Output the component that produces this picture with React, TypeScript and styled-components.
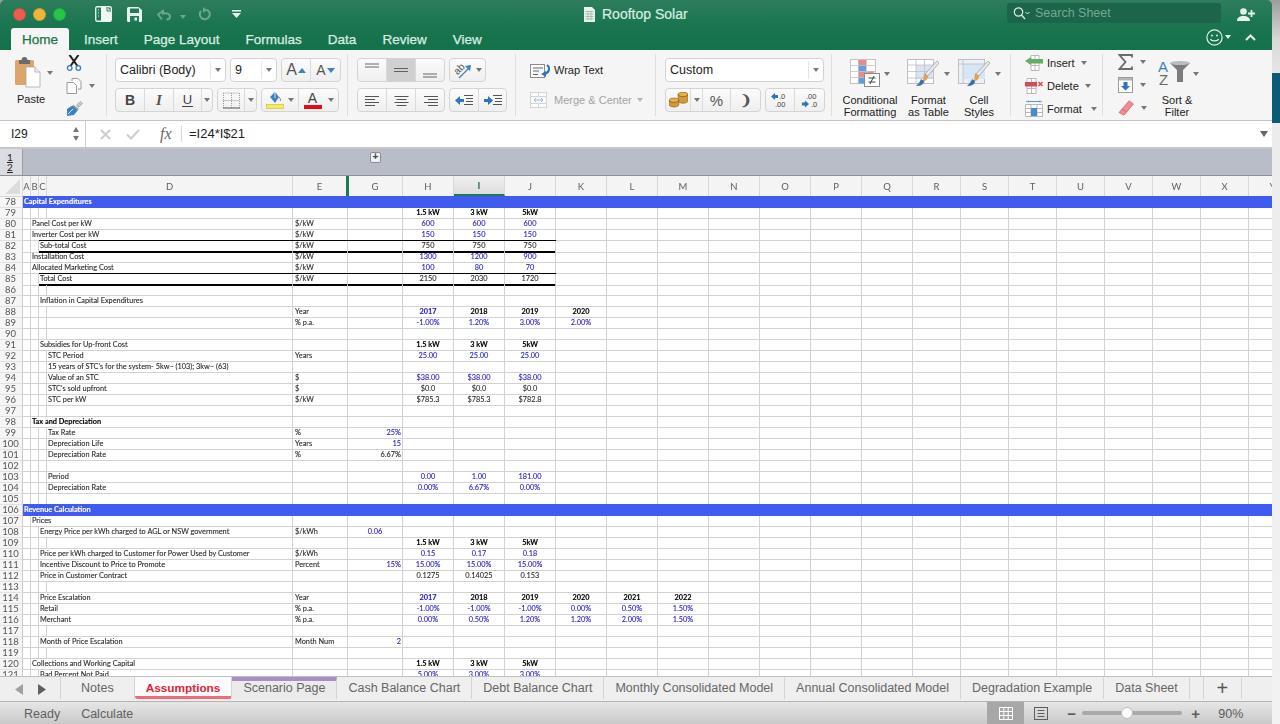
import React from 'react';
import styled, { createGlobalStyle } from 'styled-components';

const Global = createGlobalStyle`
  html, body { margin: 0; padding: 0; background: #e4e4e4; }
  * { box-sizing: border-box; }
  body { font-family: "Liberation Sans", Arial, sans-serif; overflow: hidden; }
`;

const COLS = '23px 8px 8px 8px 246px 55px 55px repeat(10, 51px) repeat(7, 48px) 48px';
const CELL_FONT = '"Lato", "Open Sans", sans-serif';

const Page = styled.div`
  width: 1280px; height: 724px; display: flex; overflow: hidden;
  background: linear-gradient(180deg, #9d9d9d 0, #d9d9d9 40px, #e6e6e6 73px, #0d5a77 73px, #0d5a77 123px, #ececec 123px, #f2f2f2 100%);
`;
const Window = styled.div`
  width: 1272px; height: 724px; display: flex; flex-direction: column; border-radius: 5px 5px 0 0; overflow: hidden;
`;
const Header = styled.header`
  height: 50px; background: linear-gradient(180deg, #2d7d5c 0, #1b7550 50%, #14714a 100%); display: flex; flex-direction: column;
`;
const TitleBar = styled.div`
  height: 28px; display: flex; align-items: center; position: relative; padding-left: 13px;
`;
const Light = styled.span<{ $c: string }>`
  width: 13px; height: 13px; border-radius: 50%; background: ${p => p.$c}; margin-right: 7px; border: 1px solid rgba(0,0,0,.12);
`;
const QuickBar = styled.div`
  display: flex; align-items: center; margin-left: 21px;
`;
const QuickSlot = styled.span<{ $m: number }>`
  display: flex; margin-left: ${p => p.$m}px;
`;
const Title = styled.div`
  position: absolute; left: 584px; top: 6px; display: flex; align-items: center; gap: 7px;
  color: #d8eee3; font-size: 14px; line-height: 16px; -webkit-text-stroke: .2px #d8eee3;
`;
const SearchBox = styled.div`
  margin-left: auto; margin-top: -2px; width: 214px; height: 20px; border-radius: 3px; background: #1c644a; display: flex; align-items: center;
  padding-left: 6px; gap: 5px; color: #73aa92; font-size: 12.5px;
`;
const TopRight = styled.span`
  display: flex; width: 51px; padding-left: 16px;
`;
const TabRow = styled.nav`
  height: 22px; display: flex; padding-left: 11px; position: relative;
`;
const RibbonTab = styled.div<{ $active?: boolean }>`
  height: 22px; padding: 0 ${p => (p.$active ? 11 : 13)}px; margin-right: ${p => (p.$active ? 2 : 0)}px; font-size: 13.5px; line-height: 23px;
  border-radius: 3px 3px 0 0;
  color: ${p => (p.$active ? '#1f7249' : '#d9eee3')};
  background: ${p => (p.$active ? '#f5f5f5' : 'transparent')};
  -webkit-text-stroke: .25px ${p => (p.$active ? '#1f7249' : '#d9eee3')};
`;
const TabTools = styled.div`
  margin-left: auto; display: flex; align-items: center; gap: 2px; padding-right: 16px; margin-top: -4px;
`;

const Ribbon = styled.section`
  height: 71px; background: #f5f5f5; border-bottom: 1px solid #c4c4c4; display: flex;
`;
const Group = styled.div<{ $w: number; $pad: number; $last?: boolean }>`
  width: ${p => p.$w}px; height: 62px; margin-top: 4px; padding: 4px 0 0 ${p => p.$pad}px; display: flex; align-items: flex-start;
  border-right: ${p => (p.$last ? 'none' : '1px solid #dedede')};
`;
const Caret = styled.span<{ $c?: string; $ml?: number; $mt?: number }>`
  display: inline-block; flex: none; width: 0; height: 0; border-left: 3px solid transparent; border-right: 3px solid transparent;
  border-top: 4px solid ${p => p.$c || '#777'}; margin-left: ${p => p.$ml || 0}px; margin-top: ${p => p.$mt || 0}px;
`;
const PasteCol = styled.div`
  width: 32px; display: flex; flex-direction: column; margin-top: -1px; font-size: 11px; line-height: 12px; color: #222;
  text-align: center; gap: 5px;
`;
const MiniCol = styled.div`
  display: flex; flex-direction: column; gap: 7px; margin: -3px 0 0 13px;
`;
const MiniRow = styled.div`
  display: flex; align-items: center; gap: 7px;
`;
const Stack = styled.div`
  display: flex; flex-direction: column; gap: 6px;
`;
const Line = styled.div`
  display: flex; gap: 4px; height: 24px; align-items: center;
`;
const Combo = styled.div<{ $w: number }>`
  width: ${p => p.$w}px; height: 24px; background: #fff; border: 1px solid #d2d2d2; border-radius: 4px; display: flex; align-items: center;
  padding-left: 4px; font-size: 12.5px; color: #222;
`;
const ComboArrow = styled.span`
  margin-left: auto; width: 15px; height: 18px; border-left: 1px solid #e6e6e6; display: flex; align-items: center; justify-content: center;
`;
const Buttons = styled.div`
  display: flex; height: 24px; border: 1px solid #d4d4d4; border-radius: 4px; overflow: hidden; background: linear-gradient(180deg, #fbfbfb, #efefef);
`;
const Btn = styled.div<{ $w: number; $on?: boolean; $gap?: number }>`
  width: ${p => p.$w}px; height: 100%; display: flex; align-items: center; justify-content: center; gap: ${p => p.$gap ?? 1}px;
  border-right: 1px solid #dadada; background: ${p => (p.$on ? '#d0d0d0' : 'transparent')}; color: #444;
  &:last-child { border-right: none; }
`;
const BoldB = styled.span`
  font-size: 14px; font-weight: 700; color: #444;
`;
const ItalicI = styled.span`
  font-family: "Liberation Serif", serif; font-style: italic; font-weight: 700; font-size: 15px; color: #555;
`;
const UnderU = styled.span`
  font-size: 13px; color: #444; border-bottom: 1px solid #444; line-height: 13px; padding: 0 1px;
`;
const GrowA = styled.span<{ $s: number }>`
  font-size: ${p => p.$s}px; color: #555; line-height: 1;
`;
const Tri = styled.span<{ $dir: 'up' | 'down' }>`
  width: 0; height: 0; border-left: 4px solid transparent; border-right: 4px solid transparent;
  ${p => (p.$dir === 'up' ? 'border-bottom: 5px solid #3f80c4;' : 'border-top: 5px solid #3f80c4;')}
`;
const ColorChip = styled.span`
  display: flex; flex-direction: column; align-items: center; width: 18px; font-size: 14px; line-height: 14px; color: #444;
`;
const ColorBar = styled.span`
  width: 18px; height: 4px; background: #e60a18;
`;
const Sym = styled.span<{ $s: number; $w?: number }>`
  font-size: ${p => p.$s}px; color: #555; font-weight: ${p => p.$w || 400}; line-height: 1;
`;
const ActionRow = styled.div<{ $dim?: boolean }>`
  height: 24px; display: flex; align-items: center; font-size: 11px; color: ${p => (p.$dim ? '#a3a3a3' : '#222')};
  gap: 3px;
`;
const StyleItem = styled.div<{ $w: number }>`
  width: ${p => p.$w}px; display: flex; flex-direction: column; align-items: center;
`;
const StyleIcon = styled.div`
  height: 36px; padding-top: 1px; display: flex; gap: 4px; align-items: flex-start;
  & > span { margin-top: 13px; }
`;
const SortIcon = styled(StyleIcon)`
  gap: 2px; padding-left: 3px;
`;
const StyleLabel = styled.div`
  font-size: 11px; line-height: 12px; text-align: center; color: #222; white-space: nowrap;
`;
const CellCol = styled.div`
  display: flex; flex-direction: column; margin-top: -7px;
`;
const CellAction = styled.div`
  flex: none; height: 23px; display: flex; align-items: center; gap: 4px; font-size: 11px; color: #222;
`;
const EditCol = styled.div`
  width: 30px; display: flex; flex-direction: column; gap: 7px; margin-top: -4px;
`;
const EditRow = styled.div`
  flex: none; display: flex; align-items: center; gap: 7px; height: 16px;
`;

const FormulaBar = styled.section`
  height: 28px; background: #fff; border-bottom: 2px solid #c6c6c6; display: flex; align-items: center; font-size: 12px; color: #222;
`;
const NameBox = styled.div`
  width: 86px; height: 100%; padding-left: 11px; border-right: 1px solid #cfcfcf; display: flex; align-items: center; justify-content: space-between; padding-right: 6px;
`;
const Stepper = styled.div`
  display: flex; flex-direction: column; gap: 4px;
`;
const StepTri = styled.span<{ $up?: boolean }>`
  width: 0; height: 0; border-left: 3.5px solid transparent; border-right: 3.5px solid transparent;
  ${p => (p.$up ? 'border-bottom: 5px solid #777;' : 'border-top: 5px solid #777;')}
`;
const FxSlot = styled.div`
  display: flex; align-items: center; width: 95px; height: 100%; padding-left: 14px; gap: 15px;
`;
const Fx = styled.span`
  font-family: "Liberation Serif", serif; font-style: italic; font-size: 16px; color: #666; margin-left: 5px;
`;
const FormulaText = styled.div`
  flex: 1; height: 16px; line-height: 16px; border-left: 1px solid #d8d8d8; padding-left: 7px; font-size: 13px;
  display: flex; justify-content: space-between; align-items: center; padding-right: 4px;
`;
const FormulaMenu = styled.span`
  width: 0; height: 0; border-left: 4px solid transparent; border-right: 4px solid transparent; border-top: 6px solid #666;
`;

const Outline = styled.div`
  height: 27px; background: #b9bdc7; border-bottom: 1px solid #8d9097; display: flex; position: relative;
`;
const OutlineLevels = styled.div`
  width: 23px; background: #dadce1; border-right: 1px solid #9a9da5; display: flex; flex-direction: column; padding-left: 7px; padding-top: 3px;
  font-size: 10px; line-height: 10px; color: #222; font-family: ${CELL_FONT};
`;
const OutlineLevel = styled.span`
  text-decoration: underline;
`;
const PlusBox = styled.div`
  margin: 3px 0 0 347px; width: 11px; height: 11px; border: 1px solid #8a8d94; border-radius: 2px; background: #eef0f3; color: #444;
  font-size: 10px; line-height: 8px; text-align: center; font-weight: 700;
`;

const Sheet = styled.div`
  flex: 1; min-height: 0; overflow: hidden; background: #fff; filter: blur(.25px);
`;
const ColHeadRow = styled.div`
  display: grid; grid-template-columns: ${COLS}; height: 21px; background: #f4f4f4; border-bottom: 1px solid #d6d6d6;
`;
const Corner = styled.div`
  position: relative; border-right: 1px solid #d8d8d8;
  &::before { content: ''; position: absolute; left: 5px; top: 3px; width: 15px; height: 15px; background: #dcdcdc; clip-path: polygon(100% 0, 100% 100%, 0 100%); }
`;
const ColHead = styled.div<{ $sel?: boolean; $mark?: boolean }>`
  display: flex; align-items: center; justify-content: center; font-family: ${CELL_FONT}; font-size: 9.5px; color: ${p => (p.$sel ? '#1f6e4a' : '#5e5e5e')};
  font-weight: ${p => (p.$sel ? 700 : 400)};
  border-right: ${p => (p.$mark ? '3px solid #1f7a52' : '1px solid #d8d8d8')};
  margin-right: ${p => (p.$mark ? '-1px' : '0')};
  background: ${p => (p.$sel ? 'linear-gradient(180deg, #f0f0f0, #dedede)' : 'transparent')};
  border-bottom: ${p => (p.$sel ? '2px solid #1f7a52' : 'none')};
`;
const RowEl = styled.div`
  display: grid; grid-template-columns: ${COLS}; height: 11px; font-family: ${CELL_FONT}; font-size: 7.35px; line-height: 10px; color: #333;
  -webkit-text-stroke: .1px currentColor;
`;
const RowNum = styled.div`
  background: #f6f6f6; border-right: 1px solid #cbcbcb; border-bottom: 1px solid #e2e2e2; font-size: 9.5px; line-height: 10px; color: #555; text-align: center; padding-right: 1px;
  -webkit-text-stroke: 0;
`;
const Cell = styled.div<{ $rule?: boolean; $align?: string; $tone?: string; $bold?: boolean; $span?: number; $pad?: number }>`
  border-right: 1px solid #d2d2d2;
  border-bottom: ${p => (p.$rule ? '2px solid #000' : '1px solid #d2d2d2')};
  ${p => (p.$rule ? 'box-shadow: 0 -1px 0 #000;' : '')}
  ${p => (p.$span ? `grid-column: span ${p.$span};` : '')}
  text-align: ${p => p.$align || 'left'};
  color: ${p => (p.$tone === 'blue' ? '#2a22c8' : p.$bold ? '#000' : '#2a2a2a')};
  font-weight: ${p => (p.$bold ? 700 : 400)};
  padding: 0 ${p => p.$pad ?? 0}px;
  white-space: nowrap;
`;
const Band = styled.div`
  grid-column: 2 / -1; background: #3f5bf0; color: #fff; font-weight: 700; padding-left: 1px; box-shadow: 0 -1px 0 #3f5bf0; line-height: 10px;
`;

const SheetTabs = styled.div`
  height: 26px; background: #efefef; border-top: 1px solid #c0c0c0; border-bottom: 1px solid #b4b4b4; display: flex; align-items: flex-start;
  font-size: 12.5px; color: #666;
`;
const TabNav = styled.div`
  width: 61px; height: 22px; padding-top: 2px; border-right: 1px solid #d4d4d4; display: flex; align-items: center; padding-left: 15px; gap: 15px;
`;
const SheetTab = styled.div<{ $active?: boolean; $accent?: boolean; $pad?: number }>`
  height: 22px; line-height: ${p => (p.$accent ? 14 : 22)}px; padding: 0 ${p => p.$pad ?? 11}px; white-space: nowrap; border-right: 1px solid #d4d4d4;
  ${p => (p.$active ? 'color: #e1233a; font-weight: 700; font-size: 11.8px; background: #fbfbfb; border-bottom: 3px solid #ee6a79; border-radius: 0 0 3px 3px;' : '')}
  ${p => (p.$accent ? 'border-top: 4px solid #a98ec7; background: #ebebeb;' : '')}
`;
const AddTab = styled.div`
  width: 39px; height: 22px; border-left: 1px solid #d4d4d4; border-right: 1px solid #d4d4d4; margin-left: 13px; display: flex; align-items: center; justify-content: center;
`;
const Status = styled.footer`
  height: 22px; background: linear-gradient(180deg, #e6e6e6, #c9c9c9); display: flex; align-items: center; font-size: 12.5px; color: #606060;
`;
const StatusText = styled.span<{ $ml: number }>`
  margin-left: ${p => p.$ml}px; padding-top: 2px;
`;
const ViewBtn = styled.div<{ $on?: boolean; $ml?: number }>`
  height: 22px; width: ${p => (p.$on ? 37 : 14)}px; margin-left: ${p => p.$ml || 0}px; display: flex; align-items: center; justify-content: center;
  background: ${p => (p.$on ? '#a7a7a7' : 'transparent')};
`;
const ZoomSign = styled.span<{ $ml: number }>`
  margin-left: ${p => p.$ml}px; font-size: 15px; font-weight: 700; color: #5d5d5d; line-height: 1; width: 8px; text-align: center;
`;
const Track = styled.div`
  margin-left: 7px; width: 100px; height: 4px; border-radius: 2px; background: #a9a9a9; position: relative;
`;
const Knob = styled.span`
  position: absolute; left: 39px; top: -4px; width: 12px; height: 12px; border-radius: 50%; background: #fafafa; border: 1px solid #bdbdbd;
`;
const Percent = styled.span`
  margin-left: 19px; color: #5a5a5a; padding-top: 1px;
`;

/* ---------- icons ---------- */
const Ico = styled.svg`
  display: block; flex: none;
`;
const SidebarIcon = () => (
  <Ico width="17" height="16" viewBox="0 0 17 16">
    <rect x=".7" y=".7" width="15.6" height="14.6" rx="1.5" fill="none" stroke="#e6f2ec" strokeWidth="1.4" />
    <path d="M6 1h6l4 4v10H6z" fill="#eef7f2" />
    <path d="M12 1v4h4" fill="none" stroke="#2a7a58" strokeWidth="1" />
    <path d="M3 4h1M3 7h1M3 10h1" stroke="#e6f2ec" strokeWidth="1.2" />
  </Ico>
);
const SaveIcon = () => (
  <Ico width="15" height="15" viewBox="0 0 15 15">
    <path d="M1.5 0h10L15 3v10.5a1.5 1.5 0 0 1-1.5 1.5h-12A1.5 1.5 0 0 1 0 13.5v-12A1.5 1.5 0 0 1 1.5 0z" fill="#e6f2ec" />
    <rect x="3" y="1.5" width="9" height="4.5" fill="#26795a" />
    <rect x="3" y="9" width="9" height="6" fill="#26795a" />
    <rect x="7.5" y="10.5" width="2.5" height="3" fill="#e6f2ec" />
  </Ico>
);
const UndoIcon = () => (
  <Ico width="16" height="13" viewBox="0 0 16 13">
    <path d="M5 11.5 1 6.5 6 3v2.6c3.5-.8 7 0 7 3 0 1.8-1.5 3-3.5 3" fill="none" stroke="#6ba88e" strokeWidth="2" />
  </Ico>
);
const RedoIcon = () => (
  <Ico width="13" height="14" viewBox="0 0 13 14">
    <path d="M8.5 2.6A5 5 0 1 1 3 4" fill="none" stroke="#6ba88e" strokeWidth="2" />
    <path d="M5 0v6l4-3z" fill="#6ba88e" />
  </Ico>
);
const CustomizeIcon = () => (
  <Ico width="9" height="8" viewBox="0 0 9 8">
    <rect x="0" y="0" width="9" height="1.6" fill="#e6f2ec" />
    <path d="M0 3h9L4.5 8z" fill="#e6f2ec" />
  </Ico>
);
const DocIcon = () => (
  <Ico width="11" height="15" viewBox="0 0 11 15">
    <path d="M0 0h8l3 3v12H0z" fill="#e8f2ec" />
    <path d="M1.5 4.5h8M1.5 7h8M1.5 9.500h8M1.5 12h8M4 4v9M7 4v9" stroke="#8fb09f" strokeWidth=".7" />
  </Ico>
);
const MagnifyIcon = () => (
  <Ico width="17" height="13" viewBox="0 0 17 13">
    <circle cx="5.5" cy="5" r="4.2" fill="none" stroke="#d8eee3" strokeWidth="1.2" />
    <path d="M8.500 8 12 12" stroke="#d8eee3" strokeWidth="1.4" />
    <path d="M12.500 5l2 2 2-2" fill="none" stroke="#d8eee3" strokeWidth="1" />
  </Ico>
);
const UserPlusIcon = () => (
  <Ico width="18" height="13" viewBox="0 0 18 13">
    <circle cx="6.500" cy="3.500" r="3.300" fill="#e6f2ec" />
    <path d="M0 13c0-3.500 2.500-5 6.500-5s6.500 1.500 6.500 5z" fill="#e6f2ec" />
    <path d="M14.500 2v7M11 5.500h7" stroke="#e6f2ec" strokeWidth="1.800" />
  </Ico>
);
const SmileIcon = () => (
  <Ico width="17" height="17" viewBox="0 0 17 17">
    <circle cx="8.500" cy="8.500" r="7.600" fill="none" stroke="#dff0e7" strokeWidth="1.200" />
    <circle cx="6" cy="6.500" r="1" fill="#dff0e7" />
    <circle cx="11" cy="6.500" r="1" fill="#dff0e7" />
    <path d="M4.500 10c1 2.500 7 2.500 8 0" fill="none" stroke="#dff0e7" strokeWidth="1.200" />
  </Ico>
);
const ChevronUp = () => (
  <Ico width="11" height="7" viewBox="0 0 11 7">
    <path d="M1 6l4.500-4.500L10 6" fill="none" stroke="#e6f2ec" strokeWidth="2" />
  </Ico>
);
const PasteIcon = () => (
  <Ico width="26" height="31" viewBox="0 0 26 31">
    <rect x="0" y="3" width="19" height="25" rx="1.500" fill="#dba56c" />
    <path d="M4 3h2.500c.3-2 1-3 3-3s2.700 1 3 3H15v4H4z" fill="#6b6b6b" />
    <path d="M11 10h9l5 5v15H11z" fill="#fff" stroke="#a8a8a8" strokeWidth=".8" />
    <path d="M20 10v5h5" fill="#f0f0f0" stroke="#a8a8a8" strokeWidth=".8" />
  </Ico>
);
const ScissorsIcon = () => (
  <Ico width="16" height="16" viewBox="0 0 16 16">
    <path d="M3.500 0 11.500 11M12.500 0 4.500 11" stroke="#1d1d1d" strokeWidth="2" />
    <circle cx="3.700" cy="13" r="2.300" fill="none" stroke="#3d7ac0" strokeWidth="1.300" />
    <circle cx="12.300" cy="13" r="2.300" fill="none" stroke="#3d7ac0" strokeWidth="1.300" />
  </Ico>
);
const CopyIcon = () => (
  <Ico width="16" height="16" viewBox="0 0 16 16">
    <path d="M6 3V.5h6l3 3V11h-3" fill="#fafafa" stroke="#9a9a9a" />
    <path d="M1 4.500h6.500l3 3v8H1z" fill="#fafafa" stroke="#9a9a9a" />
  </Ico>
);
const BrushIcon = () => (
  <Ico width="17" height="16" viewBox="0 0 17 16">
    <path d="M10.500 4 14.500 .5 16.500 2.500 12.500 6.500z" fill="#c9c9c9" stroke="#8e8e8e" strokeWidth=".6" />
    <path d="M7 3.500 13 8 8 13z" fill="#9a9a9a" />
    <path d="M1 8l5.500-3.500 5 5L8 14l-7 1z" fill="#3f80c4" />
    <path d="M2 13l5-5" stroke="#ffffff" strokeWidth=".8" />
  </Ico>
);
const BorderIcon = () => (
  <Ico width="17" height="17" viewBox="0 0 17 17">
    <path d="M.5 1h16M.5 8.500h16M.5 1v15M8.500 1v15M16.500 1v15" stroke="#9a9a9a" strokeWidth="1" strokeDasharray="1 1" fill="none" />
    <path d="M0 16h17" stroke="#555" strokeWidth="1.200" />
  </Ico>
);
const FillIcon = () => (
  <Ico width="18" height="18" viewBox="0 0 18 18">
    <path d="M4 6 9 1l4 5-4 6z" fill="#3f80c4" />
    <path d="M9 1v6" stroke="#ddd" />
    <path d="M13 6c1.500 2 2 3 1 4" fill="none" stroke="#777" />
    <rect x=".5" y="13.500" width="17" height="4" fill="#f6ee52" stroke="#c9c24a" strokeWidth=".7" />
  </Ico>
);
const VLines = ({ pos }: { pos: 0 | 1 | 2 }) => {
  const y = [3, 7.5, 13][pos];
  return (
    <Ico width="14" height="18" viewBox="0 0 14 18">
      <path d={`M0 ${y}h14M0 ${y + 3}h14`} stroke={'#555'} strokeWidth=".9" />
    </Ico>
  );
};
const HLines = ({ align }: { align: 'l' | 'c' | 'r' }) => {
  const rows: [number, number][] = [[4, 14], [7, 10], [10, 14], [13, 10]];
  return (
    <Ico width="15" height="17" viewBox="0 0 15 17">
      {rows.map(([y, w]) => {
        const x = align === 'l' ? 0 : align === 'c' ? (15 - w) / 2 : 15 - w;
        return <path key={y} d={`M${x} ${y}.5h${w}`} stroke="#555" strokeWidth="1" />;
      })}
    </Ico>
  );
};
const OrientIcon = () => (
  <Ico width="18" height="18" viewBox="0 0 18 18">
    <text x="1" y="12" fontSize="10" fill="#555" fontFamily="Liberation Sans" transform="rotate(-45 5 10)">ab</text>
    <path d="M5 17 15 7" stroke="#3f80c4" strokeWidth="1.200" />
    <path d="M11 5l6-1-1 6z" fill="#3f80c4" />
  </Ico>
);
const IndentIcon = ({ right }: { right?: boolean }) => (
  <Ico width="18" height="13" viewBox="0 0 18 13">
    <path d={right ? 'M0 5h4V2l5 4.500L4 11V8H0z' : 'M9 5H5V2L0 6.500 5 11V8h4z'} fill="#2f72bd" />
    <path d="M9 1.500h9M11 4.500h7M11 7.500h7M9 10.500h9" stroke="#555" strokeWidth="1" />
  </Ico>
);
const WrapIcon = () => (
  <Ico width="21" height="15" viewBox="0 0 21 15">
    <rect x=".5" y="1.500" width="14" height="13" fill="#fafafa" stroke="#8c8c8c" />
    <path d="M3 5h10M3 8h6M3 11.500h5" stroke="#666" strokeWidth="1" />
    <path d="M17 2c3 2 3 7-2 9" fill="none" stroke="#2f72bd" strokeWidth="2" />
    <path d="M11 11l5-3v6z" fill="#2f72bd" />
  </Ico>
);
const MergeIcon = () => (
  <Ico width="18" height="17" viewBox="0 0 18 17">
    <rect x=".5" y=".5" width="16" height="15" fill="#fbfbfb" stroke="#d4d4d4" />
    <path d="M.5 4.500h16M.5 11.500h16M8.500 .5v4M8.500 11.500v4" stroke="#d4d4d4" />
    <path d="M4 8h9M6 6 4 8l2 2M11 6l2 2-2 2" fill="none" stroke="#9cbcdd" strokeWidth="1" />
  </Ico>
);
const CoinsIcon = () => (
  <Ico width="19" height="16" viewBox="0 0 19 16">
    <ellipse cx="14" cy="2.500" rx="4.800" ry="2.200" fill="#e8b04a" stroke="#8a6420" strokeWidth=".7" />
    <path d="M9.200 2.500v6.500c0 1.200 2 2.200 4.800 2.200s4.800-1 4.800-2.200V2.500c0 1.200-2 2.200-4.800 2.200S9.200 3.700 9.200 2.500z" fill="#d69a35" stroke="#8a6420" strokeWidth=".7" />
    <ellipse cx="5" cy="8.300" rx="4.800" ry="2.200" fill="#e8b04a" stroke="#8a6420" strokeWidth=".7" />
    <path d="M.200 8.300v4.500c0 1.200 2 2.200 4.800 2.200s4.800-1 4.800-2.200V8.300c0 1.200-2 2.200-4.800 2.200S.200 9.500.200 8.300z" fill="#d69a35" stroke="#8a6420" strokeWidth=".7" />
  </Ico>
);
const DecIcon = ({ more }: { more?: boolean }) => (
  <Ico width="18" height="17" viewBox="0 0 18 17">
    {more ? (
      <>
        <path d="M0 4.500 4 1v2h3v3H4v2z" fill="#2f72bd" />
        <text x="8" y="6.500" fontSize="7.500" fill="#444" fontFamily="Liberation Sans">.0</text>
        <text x="4" y="15" fontSize="7.500" fill="#444" fontFamily="Liberation Sans">.00</text>
      </>
    ) : (
      <>
        <text x="5" y="6.500" fontSize="7.500" fill="#444" fontFamily="Liberation Sans">.00</text>
        <path d="M7 12 3 8.500v2H0v3h3v2z" transform="translate(1 0)" fill="#2f72bd" />
        <text x="10" y="15" fontSize="7.500" fill="#444" fontFamily="Liberation Sans">.0</text>
      </>
    )}
  </Ico>
);
const CondIcon = () => (
  <Ico width="30" height="28" viewBox="0 0 30 28">
    <rect x=".5" y=".5" width="25" height="24" fill="#fff" stroke="#c4c4c4" />
    <rect x="8" y="1" width="8" height="6" fill="#e98a90" />
    <rect x="8" y="6" width="8" height="6" fill="#5f9fe0" />
    <rect x="8" y="12" width="16" height="6" fill="#e98a90" />
    <rect x="8" y="18" width="8" height="6.500" fill="#5f9fe0" />
    <path d="M8.500 .5v24M16.500 .5v24M.5 6.500h25M.5 12.500h25M.5 18.500h25" stroke="#c4c4c4" strokeWidth=".8" />
    <rect x="14.500" y="14.500" width="15" height="13" fill="#fff" stroke="#8c8c8c" />
    <path d="M18.500 19h7M18.500 23h7M24 17l-4 8" stroke="#444" strokeWidth="1" />
  </Ico>
);
const TableBrushIcon = ({ plain }: { plain?: boolean }) => (
  <Ico width="33" height="28" viewBox="0 0 33 28">
    <rect x=".5" y=".5" width="26" height="24" fill={plain ? '#eaf1fa' : '#fff'} stroke="#bfbfbf" />
    {plain ? <rect x="5" y="5" width="22" height="15" fill="#d6e6f7" /> : <rect x="9" y="6" width="17" height="14" fill="#d6e6f7" />}
    {plain ? <path d="M5 .5v24M.5 5h26" stroke="#bfbfbf" strokeWidth=".8" /> : <path d="M9 .5v24M17.500 .5v24M.5 6h26M.5 12.500h26M.5 19h26" stroke="#bfbfbf" strokeWidth=".8" />}
    <path d="M30 2l2 2-11 13-3-2z" fill="#e8e8e8" stroke="#9a9a9a" strokeWidth=".7" />
    <path d="M17 14l4 3c0 3-2 5-5 5z" fill="#e6a050" />
    <path d="M9 27c4 0 8-1 8-5l-3-2c-1 3-3 5-5 7z" fill="#2f72bd" />
  </Ico>
);
const InsertIcon = () => (
  <Ico width="18" height="16" viewBox="0 0 18 16">
    <path d="M6 .5h8v15H6zM6 5.500h8M6 10.500h8M10 .5v15" fill="#fff" stroke="#aaa" strokeWidth=".8" />
    <rect x="5" y="4" width="13" height="4.500" fill="#5fb05f" />
    <path d="M6 2v8L0 6z" fill="#5fb05f" />
  </Ico>
);
const DeleteIcon = () => (
  <Ico width="18" height="16" viewBox="0 0 18 16">
    <path d="M2 .5h9v15H2zM2 5.500h9M2 10.500h9M6.500 .5v15" fill="#fff" stroke="#aaa" strokeWidth=".8" />
    <rect x="0" y="4" width="12" height="4.500" fill="#d84a50" />
    <path d="M13.500 4l4 4M17.500 4l-4 4" stroke="#d84a50" strokeWidth="1.500" />
  </Ico>
);
const FormatIcon = () => (
  <Ico width="18" height="17" viewBox="0 0 18 17">
    <path d="M.5 4.500h17v12H.5zM.5 8.500h17M.5 12.500h17M6 4.500v12M12 4.500v12" fill="#fff" stroke="#aaa" strokeWidth=".8" />
    <rect x="6" y="8" width="6" height="8" fill="#4d88c8" />
    <path d="M3 1.500h12M3 .5v2M15 .5v2M1 1.500h1M16 1.500h1" stroke="#4d88c8" strokeWidth=".9" />
  </Ico>
);
const SigmaIcon = () => (
  <Ico width="15" height="16" viewBox="0 0 15 16">
    <path d="M14 3.500V1H1.500l6 7-6 7H14v-2.500" fill="none" stroke="#6b6b6b" strokeWidth="1.800" />
  </Ico>
);
const FillDownIcon = () => (
  <Ico width="15" height="16" viewBox="0 0 15 16">
    <rect x=".5" y=".5" width="14" height="15" fill="#fff" stroke="#9c9c9c" />
    <rect x="1" y="1" width="13" height="2.500" fill="#b5b5b5" />
    <path d="M5.500 5h4v4h2.500l-4.500 4.500L3 9h2.500z" fill="#2f72bd" />
  </Ico>
);
const EraserIcon = () => (
  <Ico width="16" height="16" viewBox="0 0 16 16">
    <path d="M11 .8 15.500 4 6 15.200 1 12.500z" fill="#ef8c95" stroke="#c9606a" strokeWidth=".7" />
    <path d="M4 9l5 3" stroke="#c9606a" strokeWidth=".7" />
  </Ico>
);
const SortFilterIcon = () => (
  <Ico width="33" height="26" viewBox="0 0 33 26">
    <text x="0" y="13" fontSize="15" fill="#3f80c4" fontFamily="Liberation Sans">A</text>
    <text x="1" y="26" fontSize="15" fill="#6b6b6b" fontFamily="Liberation Sans">Z</text>
    <path d="M12 4h20l-7 7v12h-6V11z" fill="#7c7c7c" />
    <ellipse cx="22" cy="4" rx="10" ry="2" fill="#bcbcbc" />
  </Ico>
);
const XIcon = () => (
  <Ico width="11" height="11" viewBox="0 0 11 11">
    <path d="M1 1l9 9M10 1l-9 9" stroke="#cfcfcf" strokeWidth="2" />
  </Ico>
);
const CheckIcon = () => (
  <Ico width="14" height="11" viewBox="0 0 14 11">
    <path d="M1 5.500 5 9.500 13 1" fill="none" stroke="#cfcfcf" strokeWidth="2.200" />
  </Ico>
);
const NavArrow = ({ right }: { right?: boolean }) => (
  <Ico width="8" height="11" viewBox="0 0 8 11">
    <path d={right ? 'M0 0l8 5.500L0 11z' : 'M8 0 0 5.500 8 11z'} fill={right ? '#5f5f5f' : '#a0a0a0'} />
  </Ico>
);
const GridIcon = () => (
  <Ico width="14" height="13" viewBox="0 0 14 13">
    <path d="M.5 .5h13v12H.5zM.5 4.500h13M.5 8.500h13M4.800 .5v12M9.200 .5v12" fill="none" stroke="#fff" />
  </Ico>
);
const PageIcon = () => (
  <Ico width="14" height="13" viewBox="0 0 14 13">
    <rect x=".5" y=".5" width="13" height="12" fill="none" stroke="#5d5d5d" />
    <path d="M3.500 3.500h7M3.500 6.500h7M3.500 9.500h7" stroke="#5d5d5d" />
  </Ico>
);

/* ---------- data ---------- */
type Tone = 'blue' | 'black';
type Val = { t: string; tone?: Tone; bold?: boolean };
type RowData = {
  n: number; band?: string; label?: { col: 'B' | 'C' | 'D'; text: string; bold?: boolean };
  unit?: string; g?: { t: string; tone?: Tone; align?: string }; vals?: Val[]; rule?: boolean;
};
const blue = (...a: string[]): Val[] => a.map(t => ({ t, tone: 'blue' as Tone }));
const black = (...a: string[]): Val[] => a.map(t => ({ t }));
const heads = (...a: string[]): Val[] => a.map(t => ({ t, bold: true }));
const years = (...a: string[]): Val[] => a.map((t, i) => ({ t, bold: true, tone: i === 0 ? ('blue' as Tone) : undefined }));
const SIZES = heads('1.5 kW', '3 kW', '5kW');
const B = (text: string, bold?: boolean) => ({ col: 'B' as const, text, bold });
const C = (text: string) => ({ col: 'C' as const, text });
const D = (text: string) => ({ col: 'D' as const, text });

const ROWS: RowData[] = [
  { n: 78, band: 'Capital Expenditures' },
  { n: 79, vals: SIZES },
  { n: 80, label: B('Panel Cost per kW'), unit: '$/kW', vals: blue('600', '600', '600') },
  { n: 81, label: B('Inverter Cost per kW'), unit: '$/kW', vals: blue('150', '150', '150') },
  { n: 82, label: C('Sub-total Cost'), unit: '$/kW', vals: black('750', '750', '750'), rule: true },
  { n: 83, label: B('Installation Cost'), unit: '$/kW', vals: blue('1300', '1200', '900') },
  { n: 84, label: B('Allocated Marketing Cost'), unit: '$/kW', vals: blue('100', '80', '70') },
  { n: 85, label: C('Total Cost'), unit: '$/kW', vals: black('2150', '2030', '1720'), rule: true },
  { n: 86 },
  { n: 87, label: C('Inflation in Capital Expenditures') },
  { n: 88, unit: 'Year', vals: years('2017', '2018', '2019', '2020') },
  { n: 89, unit: '% p.a.', vals: blue('-1.00%', '1.20%', '3.00%', '2.00%') },
  { n: 90 },
  { n: 91, label: C('Subsidies for Up-front Cost'), vals: SIZES },
  { n: 92, label: D('STC Period'), unit: 'Years', vals: blue('25.00', '25.00', '25.00') },
  { n: 93, label: D("15 years of STC's for the system- 5kw~ (103);  3kw~ (63)") },
  { n: 94, label: D('Value of an STC'), unit: '$', vals: blue('$38.00', '$38.00', '$38.00') },
  { n: 95, label: D("STC's sold upfront"), unit: '$', vals: black('$0.0', '$0.0', '$0.0') },
  { n: 96, label: D('STC per kW'), unit: '$/kW', vals: black('$785.3', '$785.3', '$782.8') },
  { n: 97 },
  { n: 98, label: B('Tax and Depreciation', true) },
  { n: 99, label: D('Tax Rate'), unit: '%', g: { t: '25%', tone: 'blue' } },
  { n: 100, label: D('Depreciation Life'), unit: 'Years', g: { t: '15', tone: 'blue' } },
  { n: 101, label: D('Depreciation Rate'), unit: '%', g: { t: '6.67%' } },
  { n: 102 },
  { n: 103, label: D('Period'), vals: blue('0.00', '1.00', '181.00') },
  { n: 104, label: D('Depreciation Rate'), vals: blue('0.00%', '6.67%', '0.00%') },
  { n: 105 },
  { n: 106, band: 'Revenue Calculation' },
  { n: 107, label: B('Prices') },
  { n: 108, label: C('Energy Price per kWh charged to AGL or NSW government'), unit: '$/kWh', g: { t: '0.06', tone: 'blue', align: 'center' } },
  { n: 109, vals: SIZES },
  { n: 110, label: C('Price per kWh charged to Customer for Power Used by Customer'), unit: '$/kWh', vals: blue('0.15', '0.17', '0.18') },
  { n: 111, label: C('Incentive Discount to Price to Promote'), unit: 'Percent', g: { t: '15%', tone: 'blue' }, vals: blue('15.00%', '15.00%', '15.00%') },
  { n: 112, label: C('Price in Customer Contract'), vals: black('0.1275', '0.14025', '0.153') },
  { n: 113 },
  { n: 114, label: C('Price Escalation'), unit: 'Year', vals: years('2017', '2018', '2019', '2020', '2021', '2022') },
  { n: 115, label: C('Retail'), unit: '% p.a.', vals: blue('-1.00%', '-1.00%', '-1.00%', '0.00%', '0.50%', '1.50%') },
  { n: 116, label: C('Merchant'), unit: '% p.a.', vals: blue('0.00%', '0.50%', '1.20%', '1.20%', '2.00%', '1.50%') },
  { n: 117 },
  { n: 118, label: C('Month of Price Escalation'), unit: 'Month Num', g: { t: '2', tone: 'blue' } },
  { n: 119 },
  { n: 120, label: B('Collections and Working Capital'), vals: SIZES },
  { n: 121, label: C('Bad Percent Not Paid'), vals: blue('5.00%', '3.00%', '3.00%') },
];
const DATA_COLS = ['H', 'I', 'J', 'K', 'L', 'M', 'N', 'O', 'P', 'Q', 'R', 'S', 'T', 'U', 'V', 'W', 'X', 'Y'];
const HEAD_COLS = ['A', 'B', 'C', 'D', 'E', 'G', ...DATA_COLS];
const TABS = ['Cash Balance Chart', 'Debt Balance Chart', 'Monthly Consolidated Model', 'Annual Consolidated Model', 'Degradation Example', 'Data Sheet'];

const SheetRow = ({ row }: { row: RowData }) => {
  if (row.band) {
    return (
      <RowEl>
        <RowNum>{row.n}</RowNum>
        <Band>{row.band}</Band>
      </RowEl>
    );
  }
  const col = row.label?.col;
  const leading = col === 'B' ? 1 : col === 'C' ? 2 : 3;
  const span = col === 'B' ? 3 : col === 'C' ? 2 : 1;
  return (
    <RowEl>
      <RowNum>{row.n}</RowNum>
      {Array.from({ length: leading }).map((_, i) => <Cell key={i} $rule={row.rule && i >= 2} />)}
      <Cell $span={span} $rule={row.rule} $bold={row.label?.bold} $pad={1}>{row.label?.text}</Cell>
      <Cell $rule={row.rule} $pad={2}>{row.unit}</Cell>
      <Cell $rule={row.rule} $tone={row.g?.tone} $align={row.g?.align || 'right'} $pad={row.g?.align ? 0 : 1}>{row.g?.t}</Cell>
      {DATA_COLS.map((c, i) => {
        const v = row.vals?.[i];
        return <Cell key={c} $rule={row.rule && i < 3} $tone={v?.tone} $bold={v?.bold} $align="center">{v?.t}</Cell>;
      })}
    </RowEl>
  );
};

export default function App() {
  return (
    <Page>
      <Global />
      <Window>
        <Header>
          <TitleBar>
            <Light $c="#ee5b52" />
            <Light $c="#f0b43b" />
            <Light $c="#27c34a" />
            <QuickBar>
              <QuickSlot $m={1}><SidebarIcon /></QuickSlot>
              <QuickSlot $m={15}><SaveIcon /></QuickSlot>
              <QuickSlot $m={15}><UndoIcon /></QuickSlot>
              <QuickSlot $m={7}><Caret $c="#6ba88e" $mt={5} /></QuickSlot>
              <QuickSlot $m={12}><RedoIcon /></QuickSlot>
              <QuickSlot $m={21}><CustomizeIcon /></QuickSlot>
            </QuickBar>
            <Title><DocIcon />Rooftop Solar</Title>
            <SearchBox><MagnifyIcon /><span>Search Sheet</span></SearchBox>
            <TopRight><UserPlusIcon /></TopRight>
          </TitleBar>
          <TabRow>
            <RibbonTab $active>Home</RibbonTab>
            <RibbonTab>Insert</RibbonTab>
            <RibbonTab>Page Layout</RibbonTab>
            <RibbonTab>Formulas</RibbonTab>
            <RibbonTab>Data</RibbonTab>
            <RibbonTab>Review</RibbonTab>
            <RibbonTab>View</RibbonTab>
            <TabTools><SmileIcon /><Caret $c="#dff0e7" /><QuickSlot $m={12}><ChevronUp /></QuickSlot></TabTools>
          </TabRow>
        </Header>

        <Ribbon>
          <Group $w={107} $pad={15}>
            <PasteCol><PasteIcon /><span>Paste</span></PasteCol>
            <Caret $mt={13} $ml={0} />
            <MiniCol>
              <ScissorsIcon />
              <MiniRow><CopyIcon /><Caret /></MiniRow>
              <BrushIcon />
            </MiniCol>
          </Group>

          <Group $w={241} $pad={8}>
            <Stack>
              <Line>
                <Combo $w={111}>Calibri (Body)<ComboArrow><Caret /></ComboArrow></Combo>
                <Combo $w={47}>9<ComboArrow><Caret /></ComboArrow></Combo>
                <Buttons>
                  <Btn $w={29}><GrowA $s={16}>A</GrowA><Tri $dir="up" /></Btn>
                  <Btn $w={29}><GrowA $s={14}>A</GrowA><Tri $dir="down" /></Btn>
                </Buttons>
              </Line>
              <Line>
                <Buttons>
                  <Btn $w={29}><BoldB>B</BoldB></Btn>
                  <Btn $w={29}><ItalicI>I</ItalicI></Btn>
                  <Btn $w={28}><UnderU>U</UnderU></Btn>
                  <Btn $w={10}><Caret /></Btn>
                </Buttons>
                <Buttons>
                  <Btn $w={27}><BorderIcon /></Btn>
                  <Btn $w={11}><Caret /></Btn>
                </Buttons>
                <Buttons>
                  <Btn $w={37} $gap={4}><FillIcon /><Caret /></Btn>
                  <Btn $w={39} $gap={6}><ColorChip>A<ColorBar /></ColorChip><Caret /></Btn>
                </Buttons>
              </Line>
            </Stack>
          </Group>

          <Group $w={168} $pad={9}>
            <Stack>
              <Line>
                <Buttons>
                  <Btn $w={29}><VLines pos={0} /></Btn>
                  <Btn $w={29} $on><VLines pos={1} /></Btn>
                  <Btn $w={28}><VLines pos={2} /></Btn>
                </Buttons>
                <Buttons>
                  <Btn $w={35}><OrientIcon /><Caret $ml={3} /></Btn>
                </Buttons>
              </Line>
              <Line>
                <Buttons>
                  <Btn $w={29}><HLines align="l" /></Btn>
                  <Btn $w={29}><HLines align="c" /></Btn>
                  <Btn $w={28}><HLines align="r" /></Btn>
                </Buttons>
                <Buttons>
                  <Btn $w={29}><IndentIcon /></Btn>
                  <Btn $w={27}><IndentIcon right /></Btn>
                </Buttons>
              </Line>
            </Stack>
          </Group>

          <Group $w={140} $pad={14}>
            <Stack>
              <ActionRow><WrapIcon />Wrap Text</ActionRow>
              <ActionRow $dim><MergeIcon /><span>&nbsp;Merge &amp; Center</span><Caret $c="#b5b5b5" $ml={2} /></ActionRow>
            </Stack>
          </Group>

          <Group $w={176} $pad={9}>
            <Stack>
              <Line>
                <Combo $w={159}>Custom<ComboArrow><Caret /></ComboArrow></Combo>
              </Line>
              <Line>
                <Buttons>
                  <Btn $w={25}><CoinsIcon /></Btn>
                  <Btn $w={12}><Caret /></Btn>
                  <Btn $w={28}><Sym $s={15}>%</Sym></Btn>
                  <Btn $w={29}><Sym $s={14} $w={700}>❩</Sym></Btn>
                </Buttons>
                <Buttons>
                  <Btn $w={29}><DecIcon more /></Btn>
                  <Btn $w={29}><DecIcon /></Btn>
                </Buttons>
              </Line>
            </Stack>
          </Group>

          <Group $w={179} $pad={8}>
            <StyleItem $w={60}>
              <StyleIcon><CondIcon /><Caret /></StyleIcon>
              <StyleLabel>Conditional<br />Formatting</StyleLabel>
            </StyleItem>
            <StyleItem $w={57}>
              <StyleIcon><TableBrushIcon /><Caret /></StyleIcon>
              <StyleLabel>Format<br />as Table</StyleLabel>
            </StyleItem>
            <StyleItem $w={44}>
              <StyleIcon><TableBrushIcon plain /><Caret /></StyleIcon>
              <StyleLabel>Cell<br />Styles</StyleLabel>
            </StyleItem>
          </Group>

          <Group $w={92} $pad={14}>
            <CellCol>
              <CellAction><InsertIcon />Insert<Caret $ml={2} /></CellAction>
              <CellAction><DeleteIcon />Delete<Caret $ml={2} /></CellAction>
              <CellAction><FormatIcon />Format</CellAction>
            </CellCol>
            <Caret $ml={0} $mt={49} />
          </Group>

          <Group $w={169} $pad={15} $last>
            <EditCol>
              <EditRow><SigmaIcon /><Caret /></EditRow>
              <EditRow><FillDownIcon /><Caret /></EditRow>
              <EditRow><EraserIcon /><Caret /></EditRow>
            </EditCol>
            <StyleItem $w={58}>
              <SortIcon><SortFilterIcon /><Caret /></SortIcon>
              <StyleLabel>Sort &amp;<br />Filter</StyleLabel>
            </StyleItem>
          </Group>
        </Ribbon>

        <FormulaBar>
          <NameBox>I29<Stepper><StepTri $up /><StepTri /></Stepper></NameBox>
          <FxSlot><XIcon /><CheckIcon /><Fx>fx</Fx></FxSlot>
          <FormulaText>=I24*I$21<FormulaMenu /></FormulaText>
        </FormulaBar>

        <Outline>
          <OutlineLevels><OutlineLevel>1</OutlineLevel><OutlineLevel>2</OutlineLevel></OutlineLevels>
          <PlusBox>+</PlusBox>
        </Outline>

        <Sheet>
          <ColHeadRow>
            <Corner />
            {HEAD_COLS.map(c => <ColHead key={c} $sel={c === 'I'} $mark={c === 'E'}>{c}</ColHead>)}
          </ColHeadRow>
          {ROWS.map(r => <SheetRow key={r.n} row={r} />)}
        </Sheet>

        <SheetTabs>
          <TabNav><NavArrow /><NavArrow right /></TabNav>
          <SheetTab $pad={20}>Notes</SheetTab>
          <SheetTab $active>Assumptions</SheetTab>
          <SheetTab $accent>Scenario Page</SheetTab>
          {TABS.map(t => <SheetTab key={t}>{t}</SheetTab>)}
          <AddTab><Sym $s={20}>+</Sym></AddTab>
        </SheetTabs>

        <Status>
          <StatusText $ml={24}>Ready</StatusText>
          <StatusText $ml={21}>Calculate</StatusText>
          <ViewBtn $on $ml={854}><GridIcon /></ViewBtn>
          <ViewBtn $ml={10}><PageIcon /></ViewBtn>
          <ZoomSign $ml={19}>−</ZoomSign>
          <Track><Knob /></Track>
          <ZoomSign $ml={9}>+</ZoomSign>
          <Percent>90%</Percent>
        </Status>
      </Window>
    </Page>
  );
}
